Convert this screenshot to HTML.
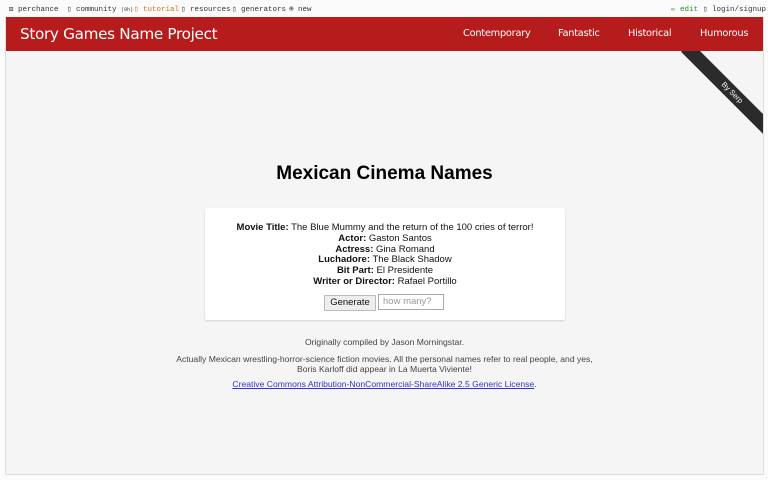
<!DOCTYPE html>
<html><head><style>
html,body{margin:0;padding:0;width:768px;height:480px;overflow:hidden;background:#fbfbfb;font-family:"Liberation Sans",sans-serif;}
.top{position:absolute;top:0;left:0;width:768px;height:17px;font-family:"Liberation Mono",monospace;font-size:7.5px;color:#333;}
.top span{position:absolute;top:4px;white-space:nowrap}
.frame{position:absolute;left:5px;top:17px;width:757px;height:457px;background:#f5f5f5;border:1px solid #ddd;border-top:none;overflow:hidden}
.hdr{position:absolute;left:0;top:0;width:757px;height:34px;background:#b71c1c;color:#fff;z-index:2}
.hdr .t{position:absolute;left:14px;top:8px;font-family:"DejaVu Sans",sans-serif;font-size:15.2px;letter-spacing:-0.3px}
.hdr .n{position:absolute;top:11px;font-family:"DejaVu Sans",sans-serif;font-size:9.8px;letter-spacing:-0.25px}
.rib{position:absolute;left:685px;top:25px;width:130px;height:13.5px;background:#2b2b2b;transform:rotate(45deg);transform-origin:0 0;color:#fff;font-size:7.5px;text-align:center;line-height:13.5px;z-index:1}
h1{position:absolute;top:146px;left:0;width:757px;text-align:center;font-size:19px;margin:0;color:#000}
.card{position:absolute;left:199px;top:191px;width:360px;height:112px;background:#fff;border-radius:2px;box-shadow:0 1px 2px rgba(0,0,0,.15);text-align:center;font-size:9.5px;line-height:10.8px;color:#111}
.lines{padding-top:15px}
.btn{position:absolute;left:119px;top:87px;width:50px;height:14px;border:1px solid #bbb;background:#eee;font-size:9.5px;line-height:14px;border-radius:1px}
.inp{position:absolute;left:173px;top:86px;border:1px solid #aaa;background:#fff;font-size:9.5px;line-height:14px;color:#999;text-align:left;padding-left:4px;box-sizing:border-box;width:66px;height:16px}
.ft{position:absolute;left:0;width:757px;text-align:center;font-size:8.6px;color:#444;line-height:10px}
a{color:#3333cc}
</style></head><body>
<div class="top">
<span style="left:9px">⚄ perchance</span>
<span style="left:67px">▯ community <small style="font-size:5px">(9h)</small></span>
<span style="left:134px;color:#d07010">▯ tutorial</span>
<span style="left:181px">▯ resources</span>
<span style="left:232px">▯ generators</span>
<span style="left:289px">⊕ new</span>
<span style="left:671px;color:#2a8a2a">✏ edit</span>
<span style="left:703px">▯ login/signup</span>
</div>
<div class="frame">
<div class="hdr">
<div class="t">Story Games Name Project</div>
<div class="n" style="left:457px">Contemporary</div>
<div class="n" style="left:552px">Fantastic</div>
<div class="n" style="left:622px">Historical</div>
<div class="n" style="left:694px">Humorous</div>
</div>
<div class="rib">By Serp</div>
<h1>Mexican Cinema Names</h1>
<div class="card"><div class="lines">
<b>Movie Title:</b> The Blue Mummy and the return of the 100 cries of terror!<br>
<b>Actor:</b> Gaston Santos<br>
<b>Actress:</b> Gina Romand<br>
<b>Luchadore:</b> The Black Shadow<br>
<b>Bit Part:</b> El Presidente<br>
<b>Writer or Director:</b> Rafael Portillo</div>
<div class="btn">Generate</div>
<div class="inp">how many?</div>
</div>
<div class="ft" style="top:320px">Originally compiled by Jason Morningstar.</div>
<div class="ft" style="top:337px">Actually Mexican wrestling-horror-science fiction movies. All the personal names refer to real people, and yes,<br>Boris Karloff did appear in La Muerta Viviente!</div>
<div class="ft" style="top:362px"><a href="#">Creative Commons Attribution-NonCommercial-ShareAlike 2.5 Generic License</a>.</div>
</div>
</body></html>
